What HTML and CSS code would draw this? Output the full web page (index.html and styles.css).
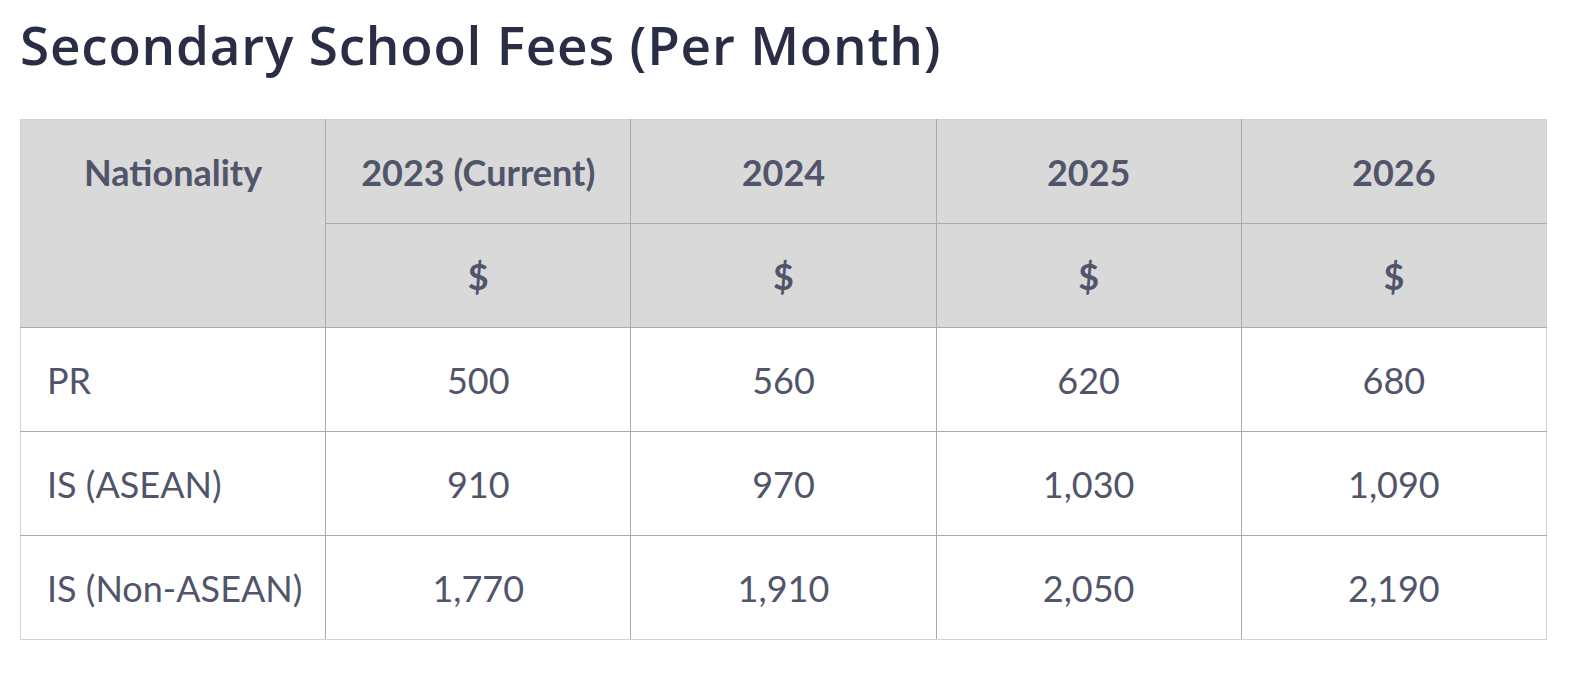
FILE: index.html
```html
<!DOCTYPE html>
<html>
<head>
<meta charset="utf-8">
<link rel="stylesheet" href="styles.css">
</head>
<body>
<h1 class="title">Secondary School Fees (Per Month)</h1>
<table class="fees">
  <thead>
    <tr>
      <th class="nat" rowspan="2">Nationality</th>
      <th>2023 (Current)</th>
      <th>2024</th>
      <th>2025</th>
      <th>2026</th>
    </tr>
    <tr>
      <th>$</th>
      <th>$</th>
      <th>$</th>
      <th>$</th>
    </tr>
  </thead>
  <tbody>
    <tr><td class="label">PR</td><td>500</td><td>560</td><td>620</td><td>680</td></tr>
    <tr><td class="label">IS (ASEAN)</td><td>910</td><td>970</td><td>1,030</td><td>1,090</td></tr>
    <tr><td class="label">IS (Non-ASEAN)</td><td>1,770</td><td>1,910</td><td>2,050</td><td>2,190</td></tr>
  </tbody>
</table>
</body>
</html>
```

FILE: styles.css
```css
html, body {
  margin: 0;
  padding: 0;
  background: #ffffff;
}
body {
  padding: 13px 0 0 20px;
  font-family: Lato, "Open Sans", sans-serif;
}
.title {
  margin: 0 0 42px 0;
  font-family: "Open Sans", "Noto Sans", sans-serif;
  font-weight: 650;
  font-size: 53px;
  line-height: 64px;
  letter-spacing: 0.8px;
  color: #2a2e45;
}
.fees {
  width: 1527px;
  border-collapse: collapse;
  table-layout: fixed;
  border: 1px solid #d2d3d7;
  color: #515569;
  font-size: 36px;
}
.fees th, .fees td {
  border: 1px solid #a8abb3;
  height: 103px;
  padding: 0 26px;
  text-align: center;
  vertical-align: middle;
  line-height: 42px;
  white-space: nowrap;
}
.fees tr:first-child th { border-top-color: #d2d3d7; }
.fees th:first-child, .fees td:first-child { border-left-color: #d2d3d7; }
.fees th:last-child, .fees td:last-child { border-right-color: #d2d3d7; }
.fees tbody tr:last-child td { border-bottom-color: #d2d3d7; }
.fees th {
  background: #d9d9d9;
  font-weight: 700;
}
.fees th.nat {
  vertical-align: top;
  padding-top: 31px;
}
.fees td {
  font-weight: 400;
}
.fees td.label {
  text-align: left;
}
```
